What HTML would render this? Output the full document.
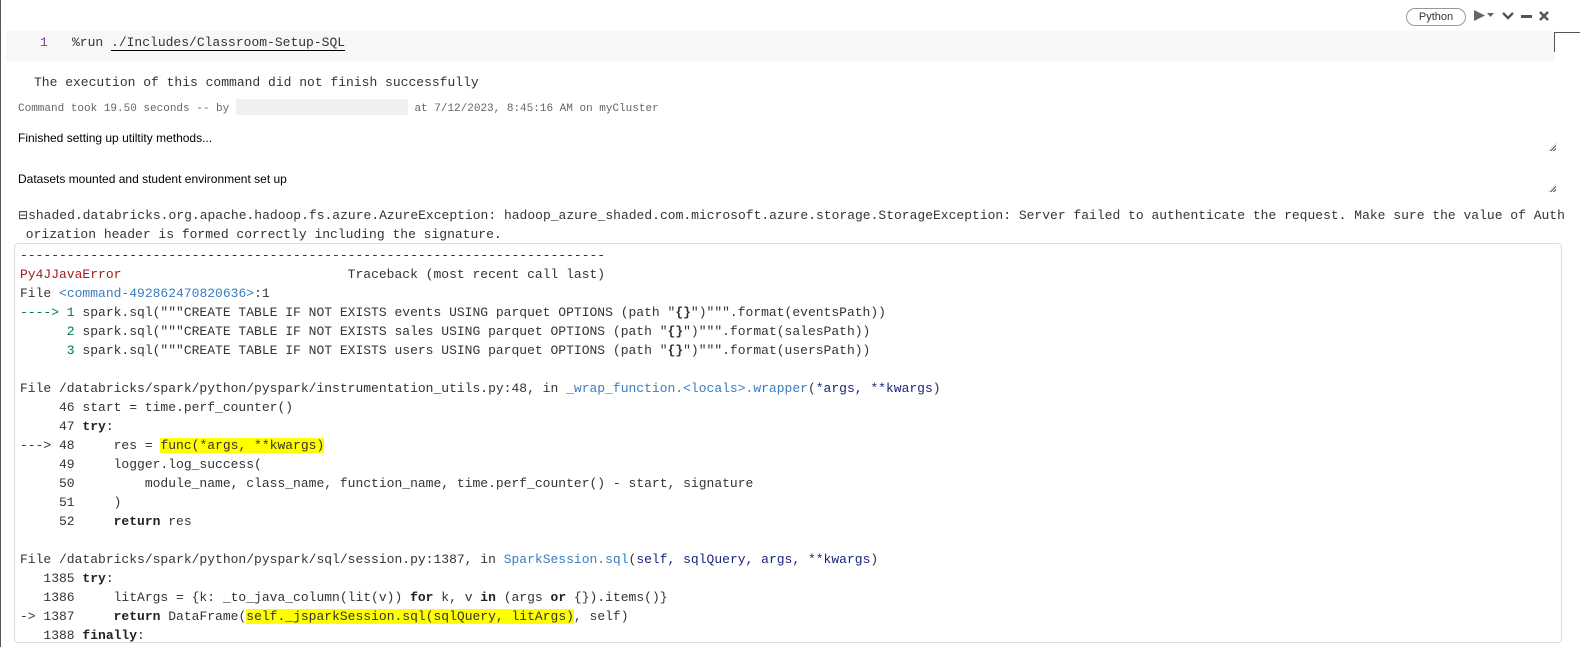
<!DOCTYPE html>
<html><head><meta charset="utf-8"><style>
*{margin:0;padding:0;box-sizing:border-box}
body{width:1580px;height:647px;background:#fff;position:relative;overflow:hidden;font-family:"Liberation Mono",monospace;color:#333}
.a{position:absolute;white-space:pre}
.m{font-family:"Liberation Mono",monospace;font-size:13px}
.s{font-family:"Liberation Sans",sans-serif;font-size:12px;color:#000}
.grip{position:absolute;width:8px;height:8px;background:repeating-linear-gradient(135deg,transparent 0 1px,#555 1px 2px);clip-path:polygon(100% 0,100% 100%,0 100%)}
.box{position:absolute;left:14px;top:243px;width:1548px;height:400px;border:1px solid #ddd;border-radius:4px;overflow:hidden}
.tb{position:absolute;left:5px;top:2px;font-size:13px;line-height:19px;white-space:pre;color:#333}
.g{color:#007a3d}.r{color:#9c1c1c}.l{color:#3a7cc4}.k{font-weight:bold;color:#222}.n{color:#1a237e}
.hl{background:#ffff00}
</style></head><body>
<div style="position:absolute;left:0;top:0;width:1px;height:647px;background:#555"></div>
<div style="position:absolute;left:1406px;top:8px;width:60px;height:18px;border:1px solid #999;border-radius:9px;font-family:'Liberation Sans',sans-serif;font-size:11px;color:#333;text-align:center;line-height:16px">Python</div>
<svg class="a" style="left:1473px;top:9px" width="24" height="14"><path d="M1 1 L12 6.5 L1 12 Z" fill="#666"/><path d="M14 4 L21 4 L17.5 8 Z" fill="#666"/></svg>
<svg class="a" style="left:1502px;top:12px" width="12" height="8"><path d="M1 1 L6 6 L11 1" stroke="#555" stroke-width="2.4" fill="none"/></svg>
<div class="a" style="left:1521px;top:15px;width:11px;height:3px;background:#555"></div>
<svg class="a" style="left:1539px;top:11px" width="10" height="10"><path d="M1 1 L9 9 M9 1 L1 9" stroke="#555" stroke-width="2.4"/></svg>
<div style="position:absolute;left:6px;top:31px;width:1549px;height:30px;background:#f7f7f7"></div>
<div style="position:absolute;left:1554px;top:32px;width:1px;height:20px;background:#555"></div>
<div style="position:absolute;left:1554px;top:32px;width:26px;height:1px;background:#555"></div>
<div class="a m" style="left:40px;top:35px;color:#7a3e9d">1</div>
<div class="a m" style="left:72px;top:35px;color:#333">%run <span style="border-bottom:1px solid #000">./Includes/Classroom-Setup-SQL</span></div>
<div class="a m" style="left:34px;top:75px;color:#333">The execution of this command did not finish successfully</div>
<div class="a" style="left:18px;top:99px;font-size:11px;color:#666">Command took 19.50 seconds -- by <span style="display:inline-block;width:172px;height:16px;background:#f0f0f0;vertical-align:-4px"></span> at 7/12/2023, 8:45:16 AM on myCluster</div>
<div class="a s" style="left:18px;top:131px">Finished setting up utiltity methods...</div>
<div class="grip" style="left:1548px;top:143px"></div>
<div class="a s" style="left:18px;top:172px">Datasets mounted and student environment set up</div>
<div class="grip" style="left:1548px;top:184px"></div>
<div class="a m" style="left:18px;top:206px;line-height:19px;color:#333"><span style="font-family:'DejaVu Sans';font-size:12px">⊟</span>shaded.databricks.org.apache.hadoop.fs.azure.AzureException: hadoop_azure_shaded.com.microsoft.azure.storage.StorageException: Server failed to authenticate the request. Make sure the value of Auth
 orization header is formed correctly including the signature.</div>
<div class="box"><div class="tb">---------------------------------------------------------------------------
<span class="r">Py4JJavaError</span>                             Traceback (most recent call last)
File <span class="l">&lt;command-492862470820636&gt;</span>:1
<span class="g">----&gt; 1</span> spark.sql("""CREATE TABLE IF NOT EXISTS events USING parquet OPTIONS (path "<b>{}</b>")""".format(eventsPath))
<span class="g">      2</span> spark.sql("""CREATE TABLE IF NOT EXISTS sales USING parquet OPTIONS (path "<b>{}</b>")""".format(salesPath))
<span class="g">      3</span> spark.sql("""CREATE TABLE IF NOT EXISTS users USING parquet OPTIONS (path "<b>{}</b>")""".format(usersPath))

File /databricks/spark/python/pyspark/instrumentation_utils.py:48, in <span class="l">_wrap_function.&lt;locals&gt;.wrapper</span>(<span class="n">*args, **kwargs</span>)
     46 start = time.perf_counter()
     47 <span class="k">try</span>:
---&gt; 48     res = <span class="hl">func(*args, **kwargs)</span>
     49     logger.log_success(
     50         module_name, class_name, function_name, time.perf_counter() - start, signature
     51     )
     52     <span class="k">return</span> res

File /databricks/spark/python/pyspark/sql/session.py:1387, in <span class="l">SparkSession.sql</span>(<span class="n">self, sqlQuery, args, **kwargs</span>)
   1385 <span class="k">try</span>:
   1386     litArgs = {k: _to_java_column(lit(v)) <span class="k">for</span> k, v <span class="k">in</span> (args <span class="k">or</span> {}).items()}
-&gt; 1387     <span class="k">return</span> DataFrame(<span class="hl">self._jsparkSession.sql(sqlQuery, litArgs)</span>, self)
   1388 <span class="k">finally</span>:</div></div>
</body></html>
